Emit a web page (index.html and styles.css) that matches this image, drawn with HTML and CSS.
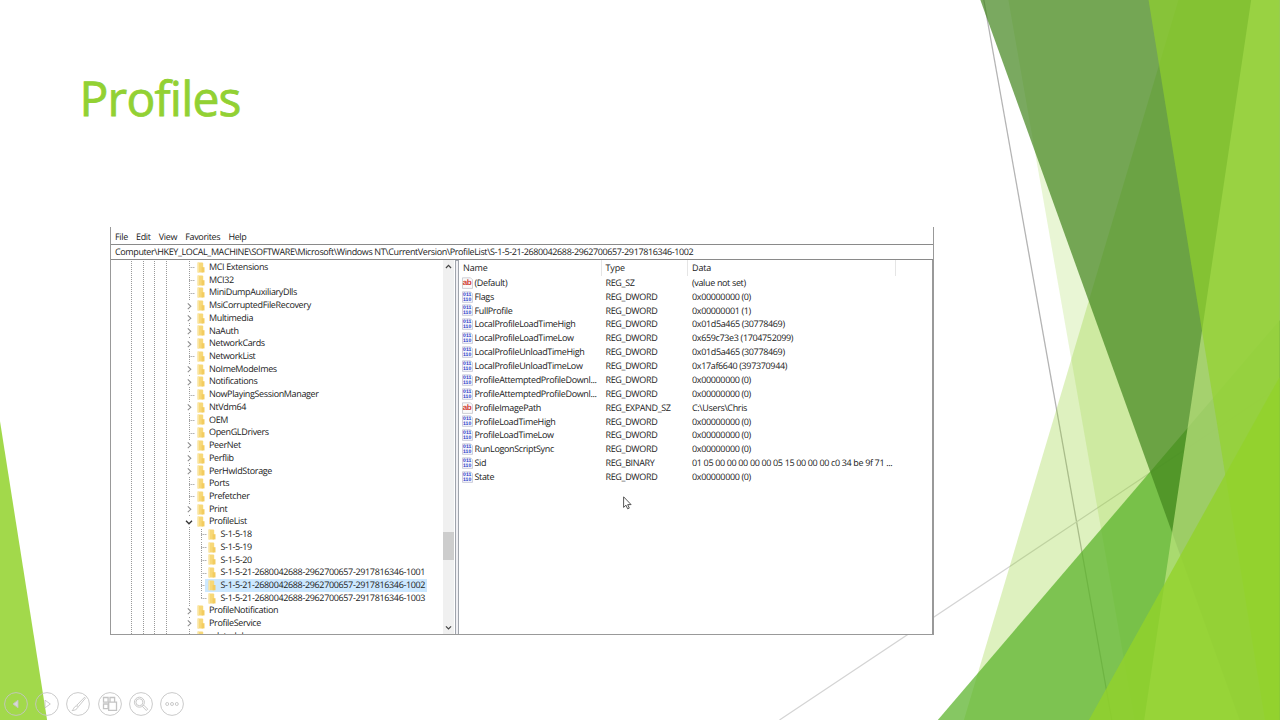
FILE: index.html
```html
<!DOCTYPE html>
<html lang="en">
  <head>
    <meta charset="UTF-8" />
    <meta name="viewport" content="width=device-width, initial-scale=1.0" />
    <title>Profiles</title>
    <link rel="stylesheet" href="styles.css">
  </head>
  <body>
    <!-- Shared icons -->
    <svg class="symbols" width="0" height="0">
      <symbol id="folder" viewBox="0 0 8 11">
        <path d="M0.6 0.6h5l0.6 1v8.8H0.6z" fill="#f7d878" />
        <path d="M4.6 5.2h2.9v5.2H4.6z" fill="#f3cc60" />
        <path d="M0.6 0.6h1.3v9.8H0.6z" fill="#fbe7a4" />
      </symbol>
      <symbol id="leaf" viewBox="0 0 16 12">
        <path d="M8 6.5h5.5" stroke="#b4b4b4" stroke-dasharray="1.5 0.5" />
      </symbol>
      <symbol id="closed" viewBox="0 0 16 12">
        <path d="M5 1h7v10H5z" fill="#fff" />
        <path d="M6.8 3.4l3 2.9-3 2.9" fill="none" stroke="#8c8c8c" stroke-width="1.1" />
      </symbol>
      <symbol id="open" viewBox="0 0 16 12">
        <path d="M4 1h8v10H4z" fill="#fff" />
        <path d="M5 4.8l3 3 3-3" fill="none" stroke="#333" stroke-width="1.3" />
      </symbol>
      <symbol id="string" viewBox="0 0 11 12">
        <path d="M0.5 0.8h8l2 2v8.6h-10z" fill="#fafafa" stroke="#c4c4cc" stroke-width="0.8" />
        <text x="0.7" y="7.6" class="glyph-ab">ab</text>
      </symbol>
      <symbol id="binary" viewBox="0 0 11 12">
        <path d="M0.5 0.8h8l2 2v8.6h-10z" fill="#f4f5fc" stroke="#c4c4d4" stroke-width="0.8" />
        <text x="1" y="5.3" class="glyph-bin">011</text>
        <text x="1" y="10.3" class="glyph-bin">110</text>
      </symbol>
    </svg>

    <div class="slide">
      <!-- Background facets -->
      <svg class="facets" viewBox="0 0 1280 720">
        <path class="line-dark" d="M983.8 0L1111.8 720" />
        <path class="line-light" d="M1279.6 386.5L779.5 720" />
        <polygon class="green" opacity="0.3" points="1178.7,-1 1279.6,-1 1279.6,720 963.9,720" />
        <polygon class="green" opacity="0.2" points="1008.2,-1 1279.6,-1 1279.6,720 1134.5,720" />
        <polygon class="leaf" opacity="0.72" points="1280,320 1280,720 937.8,720" />
        <polygon class="forest" opacity="0.7" points="980,-1 1279.8,-1 1279.8,720 1239.6,720" />
        <polygon class="lime" opacity="0.7" points="1251.3,-1 1279.6,-1 1279.6,720 1144.2,720" />
        <polygon class="green" opacity="0.65" points="1148.4,-1 1279.6,-1 1279.6,720 1264.9,720" />
        <polygon class="green" opacity="0.8" points="1279.6,376.9 1279.6,720 1088.9,720" />
        <polygon class="green" opacity="0.85" points="0,421.3 47.1,720 0,720" />
      </svg>

      <h1 class="title">Profiles</h1>

      <div class="regedit">
        <nav class="menu">
          <span>File</span><span>Edit</span><span>View</span><span>Favorites</span><span>Help</span>
        </nav>
        <div class="address"><span>Computer\HKEY_LOCAL_MACHINE\SOFTWARE\Microsoft\Windows NT\CurrentVersion\ProfileList\S-1-5-21-2680042688-2962700657-2917816346-1002</span></div>

        <div class="panes">
          <ul class="tree">
            <li><svg class="toggle"><use href="#leaf" /></svg><svg class="folder"><use href="#folder" /></svg><span>MCI Extensions</span></li>
            <li><svg class="toggle"><use href="#leaf" /></svg><svg class="folder"><use href="#folder" /></svg><span>MCI32</span></li>
            <li><svg class="toggle"><use href="#leaf" /></svg><svg class="folder"><use href="#folder" /></svg><span>MiniDumpAuxiliaryDlls</span></li>
            <li><svg class="toggle"><use href="#closed" /></svg><svg class="folder"><use href="#folder" /></svg><span>MsiCorruptedFileRecovery</span></li>
            <li><svg class="toggle"><use href="#closed" /></svg><svg class="folder"><use href="#folder" /></svg><span>Multimedia</span></li>
            <li><svg class="toggle"><use href="#closed" /></svg><svg class="folder"><use href="#folder" /></svg><span>NaAuth</span></li>
            <li><svg class="toggle"><use href="#closed" /></svg><svg class="folder"><use href="#folder" /></svg><span>NetworkCards</span></li>
            <li><svg class="toggle"><use href="#leaf" /></svg><svg class="folder"><use href="#folder" /></svg><span>NetworkList</span></li>
            <li><svg class="toggle"><use href="#closed" /></svg><svg class="folder"><use href="#folder" /></svg><span>NoImeModeImes</span></li>
            <li><svg class="toggle"><use href="#closed" /></svg><svg class="folder"><use href="#folder" /></svg><span>Notifications</span></li>
            <li><svg class="toggle"><use href="#leaf" /></svg><svg class="folder"><use href="#folder" /></svg><span>NowPlayingSessionManager</span></li>
            <li><svg class="toggle"><use href="#closed" /></svg><svg class="folder"><use href="#folder" /></svg><span>NtVdm64</span></li>
            <li><svg class="toggle"><use href="#leaf" /></svg><svg class="folder"><use href="#folder" /></svg><span>OEM</span></li>
            <li><svg class="toggle"><use href="#leaf" /></svg><svg class="folder"><use href="#folder" /></svg><span>OpenGLDrivers</span></li>
            <li><svg class="toggle"><use href="#closed" /></svg><svg class="folder"><use href="#folder" /></svg><span>PeerNet</span></li>
            <li><svg class="toggle"><use href="#closed" /></svg><svg class="folder"><use href="#folder" /></svg><span>Perflib</span></li>
            <li><svg class="toggle"><use href="#closed" /></svg><svg class="folder"><use href="#folder" /></svg><span>PerHwIdStorage</span></li>
            <li><svg class="toggle"><use href="#leaf" /></svg><svg class="folder"><use href="#folder" /></svg><span>Ports</span></li>
            <li><svg class="toggle"><use href="#leaf" /></svg><svg class="folder"><use href="#folder" /></svg><span>Prefetcher</span></li>
            <li><svg class="toggle"><use href="#closed" /></svg><svg class="folder"><use href="#folder" /></svg><span>Print</span></li>
            <li><svg class="toggle"><use href="#open" /></svg><svg class="folder"><use href="#folder" /></svg><span>ProfileList</span></li>
            <li class="child"><svg class="toggle"><use href="#leaf" /></svg><svg class="folder"><use href="#folder" /></svg><span>S-1-5-18</span></li>
            <li class="child"><svg class="toggle"><use href="#leaf" /></svg><svg class="folder"><use href="#folder" /></svg><span>S-1-5-19</span></li>
            <li class="child"><svg class="toggle"><use href="#leaf" /></svg><svg class="folder"><use href="#folder" /></svg><span>S-1-5-20</span></li>
            <li class="child"><svg class="toggle"><use href="#leaf" /></svg><svg class="folder"><use href="#folder" /></svg><span>S-1-5-21-2680042688-2962700657-2917816346-1001</span></li>
            <li class="child selected"><svg class="toggle"><use href="#leaf" /></svg><svg class="folder"><use href="#folder" /></svg><span>S-1-5-21-2680042688-2962700657-2917816346-1002</span></li>
            <li class="child last"><svg class="toggle"><use href="#leaf" /></svg><svg class="folder"><use href="#folder" /></svg><span>S-1-5-21-2680042688-2962700657-2917816346-1003</span></li>
            <li><svg class="toggle"><use href="#closed" /></svg><svg class="folder"><use href="#folder" /></svg><span>ProfileNotification</span></li>
            <li><svg class="toggle"><use href="#closed" /></svg><svg class="folder"><use href="#folder" /></svg><span>ProfileService</span></li>
            <li><svg class="toggle"></svg><svg class="folder"><use href="#folder" /></svg><span>related.desc</span></li>
          </ul>

          <div class="scrollbar">
            <svg viewBox="0 0 12 12"><path d="M3.2 7.6L6 4.8l2.8 2.8" /></svg>
            <div class="thumb"></div>
            <svg viewBox="0 0 12 12"><path d="M3.2 4.8L6 7.6l2.8-2.8" /></svg>
          </div>
          <div class="splitter"></div>

          <div class="values">
            <div class="row head"><span>Name</span><span>Type</span><span>Data</span></div>
            <div class="row"><span><svg><use href="#string" /></svg>(Default)</span><span>REG_SZ</span><span>(value not set)</span></div>
            <div class="row"><span><svg><use href="#binary" /></svg>Flags</span><span>REG_DWORD</span><span>0x00000000 (0)</span></div>
            <div class="row"><span><svg><use href="#binary" /></svg>FullProfile</span><span>REG_DWORD</span><span>0x00000001 (1)</span></div>
            <div class="row"><span><svg><use href="#binary" /></svg>LocalProfileLoadTimeHigh</span><span>REG_DWORD</span><span>0x01d5a465 (30778469)</span></div>
            <div class="row"><span><svg><use href="#binary" /></svg>LocalProfileLoadTimeLow</span><span>REG_DWORD</span><span>0x659c73e3 (1704752099)</span></div>
            <div class="row"><span><svg><use href="#binary" /></svg>LocalProfileUnloadTimeHigh</span><span>REG_DWORD</span><span>0x01d5a465 (30778469)</span></div>
            <div class="row"><span><svg><use href="#binary" /></svg>LocalProfileUnloadTimeLow</span><span>REG_DWORD</span><span>0x17af6640 (397370944)</span></div>
            <div class="row"><span><svg><use href="#binary" /></svg>ProfileAttemptedProfileDownl...</span><span>REG_DWORD</span><span>0x00000000 (0)</span></div>
            <div class="row"><span><svg><use href="#binary" /></svg>ProfileAttemptedProfileDownl...</span><span>REG_DWORD</span><span>0x00000000 (0)</span></div>
            <div class="row"><span><svg><use href="#string" /></svg>ProfileImagePath</span><span>REG_EXPAND_SZ</span><span>C:\Users\Chris</span></div>
            <div class="row"><span><svg><use href="#binary" /></svg>ProfileLoadTimeHigh</span><span>REG_DWORD</span><span>0x00000000 (0)</span></div>
            <div class="row"><span><svg><use href="#binary" /></svg>ProfileLoadTimeLow</span><span>REG_DWORD</span><span>0x00000000 (0)</span></div>
            <div class="row"><span><svg><use href="#binary" /></svg>RunLogonScriptSync</span><span>REG_DWORD</span><span>0x00000000 (0)</span></div>
            <div class="row"><span><svg><use href="#binary" /></svg>Sid</span><span>REG_BINARY</span><span>01 05 00 00 00 00 00 05 15 00 00 00 c0 34 be 9f 71 ...</span></div>
            <div class="row"><span><svg><use href="#binary" /></svg>State</span><span>REG_DWORD</span><span>0x00000000 (0)</span></div>
          </div>
        </div>
      </div>

      <!-- Mouse pointer -->
      <svg class="pointer" viewBox="0 0 9 14">
        <path d="M0.6 0.8v10.6l2.4-2.2 1.6 3.6 1.7-0.7-1.6-3.5h3.4z" />
      </svg>

      <!-- Slide show controls -->
      <div class="controls">
        <svg viewBox="0 0 24 24"><circle cx="12" cy="12" r="11.4" /><path class="solid" d="M9 12l5-3.8v7.6z" /></svg>
        <svg viewBox="0 0 24 24"><circle cx="12" cy="12" r="11.4" /><path d="M10 8.2l5.3 3.8-5.3 3.8z" /></svg>
        <svg viewBox="0 0 24 24"><circle cx="12" cy="12" r="11.4" /><path d="M18.6 5.2l-7.8 8 1.6 1.5 6.9-8.4zM10.2 13.8l1.7 1.6c-1 1.8-2.8 3-5.8 3.2 1.4-1 1.7-3.8 4.1-4.8z" /></svg>
        <svg viewBox="0 0 24 24"><circle cx="12" cy="12" r="11.4" /><path class="thick" d="M5.5 5.5h4.6v4.6H5.5zM12 5.5h4.6v4.6H12zM5.5 12h4.6v4.6H5.5zM10.7 10.2h7.8v8.2h-7.8z" /></svg>
        <svg viewBox="0 0 24 24"><circle cx="12" cy="12" r="11.4" /><circle cx="10.4" cy="10.2" r="5" /><circle cx="10.4" cy="10.2" r="3.5" /><path d="M13.4 14.4l1.3-1.3 4 4-1.4 1.4z" /></svg>
        <svg viewBox="0 0 24 24"><circle cx="12" cy="12" r="11.4" /><circle cx="7.2" cy="12" r="1.5" /><circle cx="12" cy="12" r="1.5" /><circle cx="16.8" cy="12" r="1.5" /></svg>
      </div>
    </div>
  </body>
</html>
```

FILE: styles.css
```css
body {
  margin: 0;
  background-color: #fff;
  font-family: "Open Sans", "Noto Sans", sans-serif;
  text-rendering: geometricPrecision;
}
.symbols {
  position: absolute;
}
.slide {
  position: relative;
  width: 1280px;
  height: 720px;
  overflow: hidden;
}

/* background */
.facets {
  position: absolute;
  top: 0;
  left: 0;
  width: 1280px;
  height: 720px;
}
.line-dark {
  stroke: #b4b4b4;
  stroke-width: 1.3;
}
.line-light {
  stroke: #d4d4d4;
  stroke-width: 1.2;
}
.green {
  fill: #92d22b;
}
.leaf {
  fill: #58b127;
}
.forest {
  fill: #42851d;
}
.lime {
  fill: #bee480;
}

.title {
  position: relative;
  width: max-content;
  margin: 0;
  padding: 67px 0 0 79.5px;
  font-size: 48px;
  font-weight: 400;
  line-height: 64px;
  letter-spacing: -0.8px;
  color: #92d133;
  -webkit-text-stroke: 0.8px #92d133;
}

/* registry editor */
.regedit {
  position: relative;
  display: flex;
  flex-direction: column;
  box-sizing: border-box;
  width: 824px;
  height: 408px;
  margin: 96px 0 0 110px;
  border: 1px solid #999;
  border-top: 0;
  background-color: #fff;
  font-size: 9px;
  letter-spacing: -0.35px;
  white-space: nowrap;
  color: #222;
}
.menu {
  display: flex;
  gap: 8.2px;
  height: 17px;
  padding-left: 4px;
  line-height: 20px;
  letter-spacing: -0.35px;
}
.address {
  height: 14px;
  padding-left: 4px;
  border-top: 1px solid #8a8a8a;
  border-bottom: 1px solid #8a8a8a;
  line-height: 14px;
  letter-spacing: -0.38px;
}
.panes {
  display: flex;
  flex: 1;
  min-height: 0;
  border-right: 1px solid #999;
}
.tree {
  box-sizing: border-box;
  width: 332px;
  margin: 0;
  padding: 1px 0 0 70px;
  overflow: hidden;
  list-style: none;
  background-image:
    repeating-linear-gradient(#fff 0 1px, transparent 1px 2px),
    linear-gradient(90deg, transparent 20px, #999 20px 21px, transparent 21px 32px, #999 32px 33px, transparent 33px 43px, #999 43px 44px, transparent 44px 55px, #999 55px 56px, transparent 56px 78px, #999 78px 79px, transparent 79px);
}
.tree li {
  display: flex;
  align-items: center;
  height: 12.73px;
  line-height: 12.73px;
}
.toggle {
  width: 16px;
  height: 12px;
}
.folder {
  width: 8px;
  height: 11px;
  margin: 0 4.5px 0 -0.5px;
}
.child {
  padding-left: 11.5px;
  background: repeating-linear-gradient(#fff 0 1px, transparent 1px 2px) 20px 0 / 1px 100% no-repeat,
    linear-gradient(#999, #999) 20px 0 / 1px 100% no-repeat;
}
.child.last {
  background-size: 1px 50%;
}
.selected .folder,
.selected span {
  background-color: #cce8ff;
}
.selected .folder {
  height: 12.73px;
  padding: 0 4.5px 0 3px;
  margin: 0 0 0 -3.5px;
}
.selected span {
  padding-right: 2px;
}
.scrollbar {
  display: flex;
  flex-direction: column;
  width: 11px;
  background-color: #f0f0f0;
}
.scrollbar svg {
  width: 11px;
  height: 13px;
  fill: none;
  stroke: #444;
  stroke-width: 1.3;
}
.thumb {
  height: 28px;
  margin: 259px 0 61px;
  background-color: #cdcdcd;
}
.splitter {
  width: 2px;
  margin-left: 1px;
  border: 1px solid #a0a4ac;
  border-bottom: 0;
  background-color: #f0f0f4;
}
.values {
  flex: 1;
}
.row {
  display: grid;
  grid-template-columns: 142.5px 86.5px 208px;
  height: 13.89px;
  line-height: 13.89px;
}
.row span {
  display: flex;
  align-items: center;
  padding-left: 4px;
}
.row svg {
  width: 11px;
  height: 12px;
  margin: 0 1.5px 0 -1px;
}
.row.head {
  height: 15.8px;
  line-height: 16.4px;
  letter-spacing: -0.15px;
}
.head span {
  border-right: 1px solid #e5e5e5;
}
.glyph-ab {
  font: 700 8px "Liberation Sans", sans-serif;
  letter-spacing: -0.3px;
  fill: #d03c32;
}
.glyph-bin {
  font: 700 5px "Liberation Sans", sans-serif;
  letter-spacing: 0.1px;
  fill: #2c40c8;
}

.pointer {
  position: absolute;
  left: 622.5px;
  top: 495.5px;
  width: 9px;
  height: 14px;
  fill: #fff;
  stroke: #444;
  stroke-width: 0.9;
}

/* slide show controls */
.controls {
  position: absolute;
  left: 3.7px;
  bottom: 3.7px;
  display: flex;
  gap: 7.3px;
}
.controls svg {
  width: 24px;
  height: 24px;
  fill: none;
  stroke: #c4c4c4;
  stroke-width: 0.9;
}
.controls .solid {
  fill: #d8d8d8;
}
.controls .thick {
  stroke-width: 1.3;
}
```
